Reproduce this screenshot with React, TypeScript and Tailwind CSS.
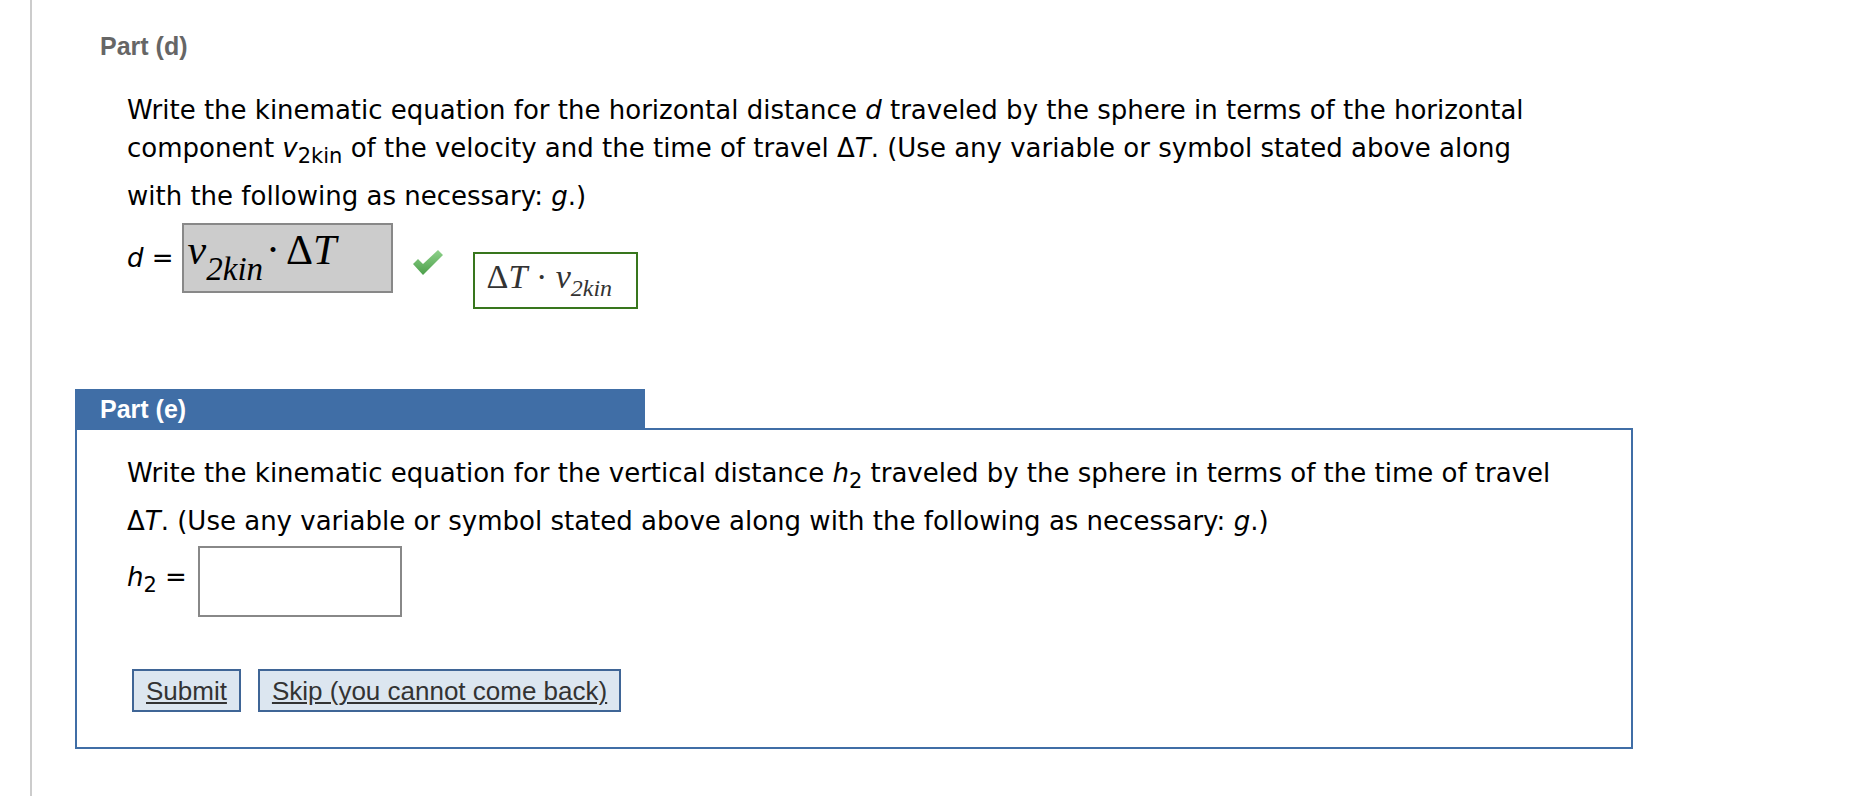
export default function App() {
  return (
    <div className="min-h-screen bg-white pl-[30px] font-['DejaVu_Sans',Verdana,sans-serif] text-black">
      <div className="min-h-[796px] border-l-2 border-[#cccccc] pl-[43px] pt-[32px]">
        {/* Part (d) - already answered */}
        <h2 className="pl-[25px] font-['Liberation_Sans',Arial,sans-serif] text-[25px] font-bold leading-[28px] text-[#666666]">
          Part (d)
        </h2>
        <p className="mt-[31px] pl-[52px] text-[26px] leading-[38px] whitespace-nowrap">
          Write the kinematic equation for the horizontal distance <i>d</i> traveled by the sphere in terms of the horizontal
          <br />
          component <i>v</i>
          <span className="align-sub text-[21px] leading-[42px]">2kin</span> of the velocity and the time of travel Δ<i>T</i>.
          (Use any variable or symbol stated above along
          <br />
          with the following as necessary: <i>g</i>.)
        </p>

        <div className="mt-[8px] flex items-start pl-[52px]">
          <span className="mt-[16px] text-[26px] leading-[38px]">
            <i>d</i> =
          </span>
          <div className="ml-[8px] h-[70px] w-[211px] overflow-hidden whitespace-nowrap border-2 border-[#888888] bg-[#cccccc] pl-[4px] pt-[2px] font-['Liberation_Serif','Times_New_Roman',serif] text-[42px] leading-[46px]">
            <i>v</i>
            <i className="align-[-16px] text-[33px]">2kin</i>
            <span className="ml-[3px]">·</span>
            <span className="ml-[6px]">Δ</span>
            <i>T</i>
          </div>
          <svg className="ml-[20px] mt-[27px]" width="30" height="25" viewBox="0 0 30 25">
            <defs>
              <linearGradient id="chk" x1="0" y1="0" x2="0" y2="1">
                <stop offset="0" stopColor="#8fd28b" />
                <stop offset="1" stopColor="#4c9f4a" />
              </linearGradient>
            </defs>
            <path d="M0 14 L5 9 L10 14 L25 0 L30 5 L10 25 Z" fill="url(#chk)" />
          </svg>
          <div className="ml-[30px] mt-[29px] h-[57px] w-[165px] whitespace-nowrap border-2 border-[#38761d] pl-[12px] pt-[3px] font-['Liberation_Serif','Times_New_Roman',serif] text-[34px] leading-[40px] text-[#333333]">
            Δ<i>T</i> · <i>v</i>
            <i className="align-sub text-[24px]">2kin</i>
          </div>
        </div>

        {/* Part (e) - current question */}
        <div className="mt-[80px]">
          <div className="h-[39px] w-[570px] bg-[#406ea6] pl-[25px] pt-[2px] font-['Liberation_Sans',Arial,sans-serif] text-[25px] font-bold leading-[37px] text-white">
            Part (e)
          </div>
          <div className="w-[1558px] border-2 border-[#406ea6] pb-[35px] pl-[50px] pt-[24px]">
            <p className="text-[26px] leading-[38px] whitespace-nowrap">
              Write the kinematic equation for the vertical distance <i>h</i>
              <span className="align-sub text-[21px] leading-[42px]">2</span> traveled by the sphere in terms of the time of
              travel
              <br />
              Δ<i>T</i>. (Use any variable or symbol stated above along with the following as necessary: <i>g</i>.)
            </p>

            <div className="mt-[6px] flex items-start">
              <span className="mt-[12px] text-[26px] leading-[38px]">
                <i>h</i>
                <span className="align-sub text-[21px]">2</span> =
              </span>
              <input
                type="text"
                className="ml-[11px] h-[71px] w-[204px] border-2 border-[#888888] bg-white outline-none"
              />
            </div>

            <div className="ml-[5px] mt-[52px] flex gap-[17px]">
              <button className="border-2 border-[#3f6596] bg-[#dce6f0] px-[12px] pb-[4px] pt-[5px] font-['Liberation_Sans',Arial,sans-serif] text-[26px] leading-[30px] text-[#333333] underline">
                Submit
              </button>
              <button className="border-2 border-[#3f6596] bg-[#dce6f0] px-[12px] pb-[4px] pt-[5px] font-['Liberation_Sans',Arial,sans-serif] text-[26px] leading-[30px] text-[#333333] underline">
                Skip (you cannot come back)
              </button>
            </div>
          </div>
        </div>
      </div>
    </div>
  );
}
